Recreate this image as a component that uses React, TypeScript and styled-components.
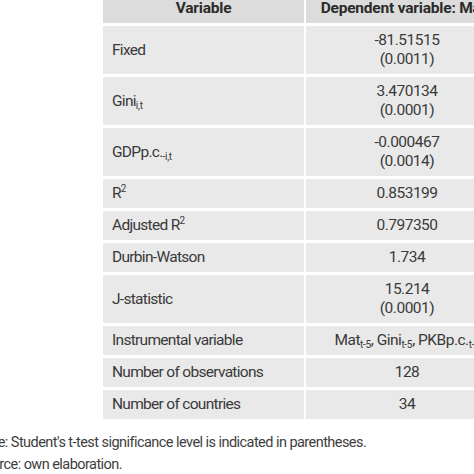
import React from "react";
import styled, { createGlobalStyle } from "styled-components";

const Global = createGlobalStyle`
  html, body {
    margin: 0;
    padding: 0;
    background: #ffffff;
    overflow: hidden;
    width: 474px;
    height: 474px;
  }
  body {
    font-family: Roboto, "Liberation Sans", sans-serif;
    color: #3a3a3a;
  }
`;

const Page = styled.div`
  display: flex;
  flex-direction: column;
  width: 474px;
  height: 474px;
  overflow: hidden;
`;

const Table = styled.div`
  display: grid;
  grid-template-columns: 201px 202px;
  column-gap: 2px;
  row-gap: 3px;
  margin: -6px 0 0 103px;
  width: 405px;
  flex-shrink: 0;
`;

const HeadCell = styled.div`
  background: #dcdcdc;
  color: #2b2b2b;
  font-weight: 700;
  font-size: 15.5px;
  letter-spacing: -0.2px;
  line-height: 19px;
  padding: 5px 9px;
  text-align: center;
  white-space: nowrap;
`;

const LabelCell = styled.div`
  background: #e9e9e9;
  font-size: 15.5px;
  letter-spacing: -0.7px;
  line-height: 19px;
  padding: 5px 9px;
  display: flex;
  align-items: center;
  white-space: nowrap;
`;

const ValueCell = styled.div`
  background: #e9e9e9;
  font-size: 15.5px;
  letter-spacing: -0.5px;
  line-height: 19px;
  padding: 5px 9px;
  display: flex;
  flex-direction: column;
  align-items: center;
  justify-content: center;
  white-space: nowrap;
`;

const Sub = styled.sub`
  font-size: 10px;
  letter-spacing: -0.3px;
  line-height: 0;
  vertical-align: -3px;
`;

const Sup = styled.sup`
  font-size: 10px;
  line-height: 0;
  vertical-align: 6px;
`;

const Notes = styled.div`
  margin: 13px 0 0 -24px;
  font-size: 14.5px;
  letter-spacing: -0.55px;
  line-height: 22px;
  color: #3e3e3e;
  white-space: nowrap;
`;

type Row = { label: React.ReactNode; value: React.ReactNode[] };

const rows: Row[] = [
  { label: "Fixed", value: ["-81.51515", "(0.0011)"] },
  { label: <>Gini<Sub>i,t</Sub></>, value: ["3.470134", "(0.0001)"] },
  { label: <>GDPp.c.<Sub>-i,t</Sub></>, value: ["-0.000467", "(0.0014)"] },
  { label: <>R<Sup>2</Sup></>, value: ["0.853199"] },
  { label: <>Adjusted R<Sup>2</Sup></>, value: ["0.797350"] },
  { label: "Durbin-Watson", value: ["1.734"] },
  { label: "J-statistic", value: ["15.214", "(0.0001)"] },
  {
    label: "Instrumental variable",
    value: [
      <>
        Mat<Sub>t-5</Sub>, Gini<Sub>t-5</Sub>, PKBp.c.<Sub>t-5</Sub>
      </>,
    ],
  },
  { label: "Number of observations", value: ["128"] },
  { label: "Number of countries", value: ["34"] },
];

export default function App() {
  return (
    <>
      <Global />
      <Page>
        <Table>
          <HeadCell>Variable</HeadCell>
          <HeadCell>
            Dependent variable: Mat<Sub>i,t</Sub>
          </HeadCell>
          {rows.map((r, i) => (
            <React.Fragment key={i}>
              <LabelCell>
                <span>{r.label}</span>
              </LabelCell>
              <ValueCell>
                {r.value.map((v, j) => (
                  <span key={j}>{v}</span>
                ))}
              </ValueCell>
            </React.Fragment>
          ))}
        </Table>
        <Notes>
          <div>Note: Student's t-test significance level is indicated in parentheses.</div>
          <div>Source: own elaboration.</div>
        </Notes>
      </Page>
    </>
  );
}
